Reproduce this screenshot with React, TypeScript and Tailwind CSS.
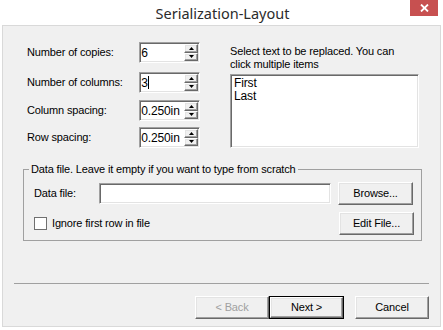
import React from "react";

const sunken =
  "border border-t-[#a0a0a0] border-l-[#a0a0a0] border-r-white border-b-white shadow-[inset_1px_1px_0_#696969,inset_-1px_-1px_0_#e3e3e3]";
const raised =
  "border border-t-white border-l-white border-r-[#696969] border-b-[#696969] shadow-[inset_-1px_-1px_0_#a0a0a0,inset_1px_1px_0_#e3e3e3]";

function Tri({ up }: { up?: boolean }) {
  return (
    <svg width="5" height="3" viewBox="0 0 5 3">
      {up ? <polygon points="2.5,0 5,3 0,3" fill="#000" /> : <polygon points="0,0 5,0 2.5,3" fill="#000" />}
    </svg>
  );
}

function Spin({ value, caret }: { value: string; caret?: boolean }) {
  return (
    <div className={`w-[61px] h-[21px] flex bg-white ${sunken}`}>
      <div className="flex-1 flex items-center pl-[1px] text-[12px] leading-[14px] text-black">
        {value}
        {caret && <span className="inline-block w-px h-[13px] bg-black" />}
      </div>
      <div className="w-[15px] flex flex-col py-[1px] pr-[1px]">
        <div className={`flex-1 flex items-center justify-center bg-[#f0f0f0] ${raised}`}>
          <Tri up />
        </div>
        <div className={`flex-1 flex items-center justify-center bg-[#f0f0f0] ${raised}`}>
          <Tri />
        </div>
      </div>
    </div>
  );
}

function Row({ label, value, caret, mt }: { label: string; value: string; caret?: boolean; mt: string }) {
  return (
    <div className={`flex items-center h-[21px] ${mt}`}>
      <div className="w-[113px]">{label}</div>
      <Spin value={value} caret={caret} />
    </div>
  );
}

function Btn({ children, w, disabled, def }: { children: React.ReactNode; w: string; disabled?: boolean; def?: boolean }) {
  const inner = (
    <div
      className={`h-full w-full flex items-center justify-center bg-[#f0f0f0] ${raised} ${
        disabled ? "text-[#a0a0a0]" : "text-black"
      }`}
    >
      {children}
    </div>
  );
  return def ? (
    <div className={`${w} h-[23px] border border-black`}>{inner}</div>
  ) : (
    <div className={`${w} h-[23px]`}>{inner}</div>
  );
}

export default function App() {
  return (
    <div className="w-[443px] h-[330px] bg-white flex flex-col overflow-hidden font-['Liberation_Sans',Arial,sans-serif] text-[11px] leading-[13px] tracking-[-0.15px] text-black">
      <div className="h-[25px] grid grid-cols-[1fr_auto_1fr]">
        <div />
        <div className="self-center text-[14.5px] leading-[18px] tracking-normal text-[#2b2b2b] font-['Noto_Sans','Open_Sans',sans-serif] pl-[2px]">
          Serialization-Layout
        </div>
        <div className="flex justify-end items-start pr-[5px]">
          <div className="w-[28px] h-[16px] bg-[#c75050] flex items-center justify-center">
            <svg width="9" height="8" viewBox="0 0 9 8">
              <path d="M1 0.5 L8 7.5 M8 0.5 L1 7.5" stroke="#fff" strokeWidth="1.8" />
            </svg>
          </div>
        </div>
      </div>

      <div className="mx-[2px] mb-[3px] flex-1 border border-[#d9d9d9] bg-[#f0f0f0] flex flex-col">
        <div className="flex pt-[16px]">
          <div className="ml-[24px] w-[173px] flex flex-col">
            <Row label="Number of copies:" value="6" mt="" />
            <Row label="Number of columns:" value="3" caret mt="mt-[9px]" />
            <Row label="Column spacing:" value="0.250in" mt="mt-[7px]" />
            <Row label="Row spacing:" value="0.250in" mt="mt-[6px]" />
          </div>
          <div className="ml-[30px] flex flex-col pt-[3px]">
            <div className="leading-[13px]">
              Select text to be replaced. You can
              <br />
              click multiple items
            </div>
            <div className={`mt-[3px] w-[189px] h-[74px] bg-white ${sunken} pt-[2px] pl-[3px] text-[12px] leading-[13px]`}>
              <div>First</div>
              <div>Last</div>
            </div>
          </div>
        </div>

        <div className="mt-[21px] ml-[20px] w-[399px] border border-[#a0a0a0] flex flex-col pb-[5px]">
          <div className="-mt-[7px] ml-[5px] self-start px-[2px] bg-[#f0f0f0] leading-[13px]">
            Data file. Leave it empty if you want to type from scratch
          </div>
          <div className="mt-[6px] flex items-center">
            <div className="ml-[10px] w-[65px]">Data file:</div>
            <div className={`w-[232px] h-[21px] bg-white ${sunken}`} />
            <div className="ml-[7px]">
              <Btn w="w-[75px]">Browse...</Btn>
            </div>
          </div>
          <div className="mt-[7px] flex items-center">
            <div className="ml-[10px] w-[13px] h-[13px] bg-white border border-[#707070]" />
            <div className="ml-[5px]">Ignore first row in file</div>
            <div className="ml-auto mr-[7px]">
              <Btn w="w-[75px]">Edit File...</Btn>
            </div>
          </div>
        </div>

        <div className="mt-[42px] ml-[11px] w-[415px] h-px bg-[#a0a0a0]" />

        <div className="mt-[12px] flex">
          <div className="ml-[192px]">
            <Btn w="w-[74px]" disabled>
              &lt; Back
            </Btn>
          </div>
          <Btn w="w-[75px]" def>
            Next &gt;
          </Btn>
          <div className="ml-[11px]">
            <Btn w="w-[74px]">Cancel</Btn>
          </div>
        </div>
      </div>
    </div>
  );
}
